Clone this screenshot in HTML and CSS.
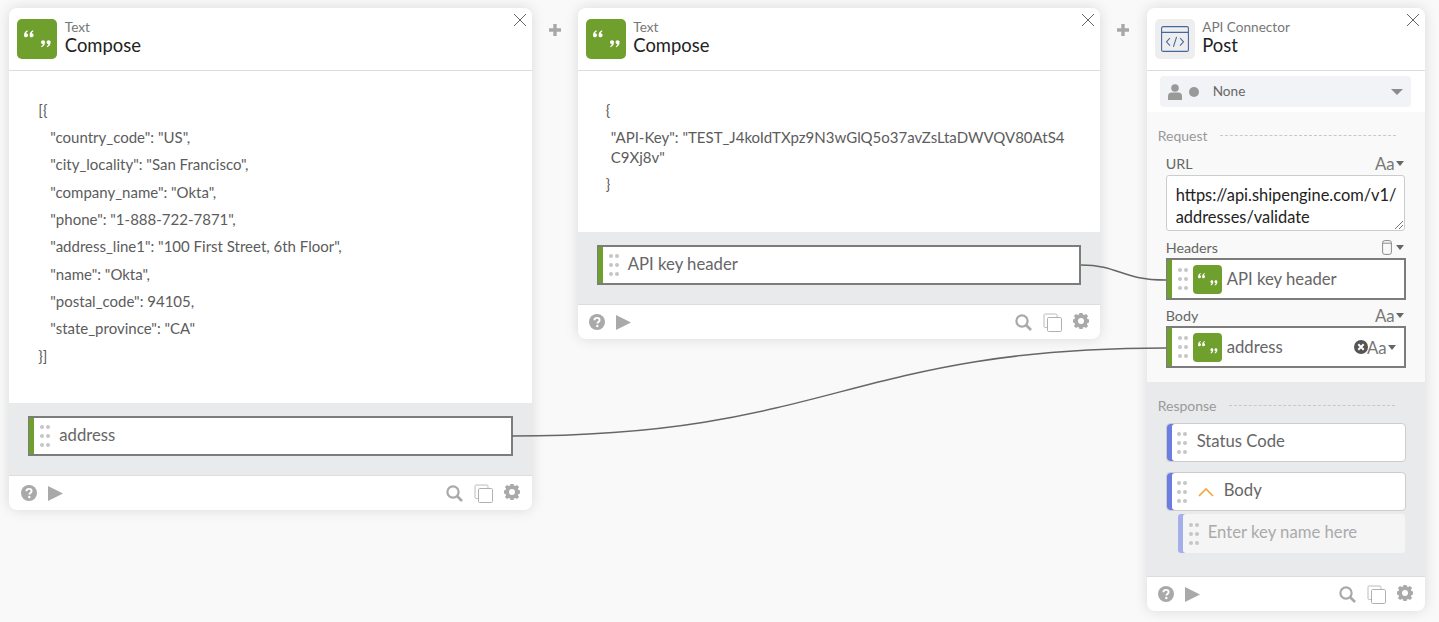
FILE: index.html
```html
<!DOCTYPE html>
<html lang="en">
<head>
<meta charset="utf-8">
<title>Flow</title>
<link rel="stylesheet" href="styles.css">
</head>
<body>
<svg class="defs" width="0" height="0" aria-hidden="true">
  <symbol id="quotes" viewBox="0 0 40 40">
    <g fill="#fff">
      <path d="M7 16.400c0-2.500 1.100-4.200 3.300-5.200l.6 1c-1.100.6-1.700 1.300-1.700 2.100 1 0 1.800.8 1.800 1.900s-.8 2-2 2-2-.8-2-1.800z"/>
      <path d="M12.600 16.400c0-2.500 1.100-4.200 3.300-5.200l.6 1c-1.100.6-1.700 1.300-1.700 2.100 1 0 1.800.8 1.800 1.900s-.8 2-2 2-2-.8-2-1.800z"/>
      <path d="M28 23c0 2.500-1.100 4.200-3.300 5.200l-.6-1c1.100-.6 1.700-1.300 1.700-2.100-1 0-1.800-.8-1.800-1.900s.8-2 2-2 2 .8 2 1.800z"/>
      <path d="M33.600 23c0 2.500-1.100 4.200-3.300 5.200l-.6-1c1.100-.6 1.700-1.300 1.700-2.100-1 0-1.800-.8-1.800-1.900s.8-2 2-2 2 .8 2 1.800z"/>
    </g>
  </symbol>
  <symbol id="close" viewBox="0 0 14 14"><path d="M1 1l12 12M13 1L1 13" stroke="#666" stroke-width="1" fill="none"/></symbol>
  <symbol id="plus" viewBox="0 0 14 14"><path d="M7 1v12M1 7h12" stroke="#a8a8a8" stroke-width="3.400" fill="none"/></symbol>
  <symbol id="help" viewBox="0 0 16 16"><circle cx="8" cy="8" r="8" fill="#a9a9a9"/><path d="M5.400 6.200C5.500 4.700 6.600 3.900 8 3.900c1.500 0 2.600.9 2.600 2.200 0 1.900-2.200 1.800-2.200 3.400" fill="none" stroke="#fff" stroke-width="1.900"/><circle cx="8.300" cy="12" r="1.200" fill="#fff"/></symbol>
  <symbol id="play" viewBox="0 0 15 15"><path d="M0 0l15 7.500L0 15z" fill="#a9a9a9"/></symbol>
  <symbol id="search" viewBox="0 0 17 17"><circle cx="7" cy="7" r="5.600" fill="none" stroke="#a9a9a9" stroke-width="2.200"/><path d="M11 11l5 5" stroke="#a9a9a9" stroke-width="2.600"/></symbol>
  <symbol id="copy" viewBox="0 0 19 19"><path d="M4 14.500H2.200A1.200 1.200 0 0 1 1 13.300V2.200A1.200 1.200 0 0 1 2.200 1h10.600A1.200 1.200 0 0 1 14 2.200V4" fill="none" stroke="#bcbcbc"/><rect x="4.500" y="4.500" width="14" height="14" rx="1.200" fill="#fff" stroke="#b0b0b0"/></symbol>
  <symbol id="gear" viewBox="0 0 16 16"><path fill="#a9a9a9" fill-rule="evenodd" d="M6.500 0h3l.4 2.100 1.300.6L13 1.500l2.100 2.100-1.200 1.800.6 1.300 2.100.4v3l-2.100.4-.6 1.300 1.200 1.800-2.100 2.100-1.800-1.200-1.300.6-.4 2.100h-3l-.4-2.100-1.300-.6L3 15.700.9 13.600l1.200-1.800-.6-1.300L-.6 10.100v-3l2.100-.4.6-1.300L.9 3.600 3 1.500l1.800 1.200 1.300-.6zM8 5.500a3 3 0 1 0 0 6 3 3 0 0 0 0-6z" transform="translate(0 -.6)"/></symbol>
  <symbol id="grip" viewBox="0 0 10 20"><g fill="#c6c6c6"><circle cx="2" cy="1" r="2"/><circle cx="8" cy="1" r="2"/><circle cx="2" cy="10" r="2"/><circle cx="8" cy="10" r="2"/><circle cx="2" cy="19" r="2"/><circle cx="8" cy="19" r="2"/></g></symbol>
  <symbol id="user" viewBox="0 0 14 16"><circle cx="7" cy="4" r="3.800" fill="#999"/><path d="M0 16v-4c0-2 1.500-3.500 3.500-3.500h7c2 0 3.500 1.500 3.500 3.500v4z" fill="#999"/></symbol>
  <symbol id="db" viewBox="0 0 10 15"><rect x=".6" y=".6" width="8.800" height="13.800" rx="2.200" fill="none" stroke="#8a8a8a"/><path d="M.6 3.200h8.800" stroke="#8a8a8a"/></symbol>
  <symbol id="api" viewBox="0 0 28 26"><g fill="none" stroke="#44679f" stroke-width="1.100"><rect x=".6" y=".6" width="26.800" height="24.800" rx="1.500"/><path d="M.6 6.400h26.800"/><path d="M9 12l-3.500 3.800L9 19.600M19 12l3.500 3.800L19 19.600M15.600 10.800l-3.200 10"/></g></symbol>
  <symbol id="clear" viewBox="0 0 14 14"><circle cx="7" cy="7" r="7" fill="#555"/><path d="M4.300 4.300l5.400 5.400M9.700 4.300l-5.400 5.400" stroke="#fff" stroke-width="2"/></symbol>
  <symbol id="chev" viewBox="0 0 16 10"><path d="M1 9l7-7 7 7" fill="none" stroke="#f2a93b" stroke-width="1.700"/></symbol>
</svg>

<main class="canvas">
  <svg class="wires" width="1439" height="622" aria-hidden="true">
    <path d="M512 436C830 436 850 348 1166 348" fill="none" stroke="#666" stroke-width="1.500"/>
    <path d="M1081 265C1120 265 1120 280 1166 280" fill="none" stroke="#666" stroke-width="1.500"/>
  </svg>

  <section class="card card-wide">
    <svg class="close"><use href="#close"/></svg>
    <header class="head">
      <svg class="tile"><use href="#quotes"/></svg>
      <div class="titles"><div class="kind">Text</div><div class="name">Compose</div></div>
    </header>
    <div class="text text-a">
      <p class="line">[{</p>
      <p class="line in">"country_code": "US",</p>
      <p class="line in">"city_locality": "San Francisco",</p>
      <p class="line in">"company_name": "Okta",</p>
      <p class="line in">"phone": "1-888-722-7871",</p>
      <p class="line in">"address_line1": "100 First Street, 6th Floor",</p>
      <p class="line in">"name": "Okta",</p>
      <p class="line in">"postal_code": 94105,</p>
      <p class="line in">"state_province": "CA"</p>
      <p class="line">}]</p>
    </div>
    <div class="outs">
      <div class="pill pill-sel"><svg class="grip"><use href="#grip"/></svg><span class="label">address</span></div>
    </div>
    <footer class="foot">
      <svg class="ic-help"><use href="#help"/></svg><svg class="ic-play"><use href="#play"/></svg>
      <span class="spacer"></span>
      <svg class="ic-search"><use href="#search"/></svg><svg class="ic-copy"><use href="#copy"/></svg><svg class="ic-gear"><use href="#gear"/></svg>
    </footer>
  </section>

  <div class="gutter"><svg class="plus"><use href="#plus"/></svg></div>

  <section class="card card-wide">
    <svg class="close"><use href="#close"/></svg>
    <header class="head">
      <svg class="tile"><use href="#quotes"/></svg>
      <div class="titles"><div class="kind">Text</div><div class="name">Compose</div></div>
    </header>
    <div class="text text-b">
      <p class="line">{</p>
      <p class="line key">"API-Key": "TEST_J4koIdTXpz9N3wGlQ5o37avZsLtaDWVQV80AtS4<br>C9Xj8v"</p>
      <p class="line">}</p>
    </div>
    <div class="outs">
      <div class="pill pill-sel"><svg class="grip"><use href="#grip"/></svg><span class="label">API key header</span></div>
    </div>
    <footer class="foot">
      <svg class="ic-help"><use href="#help"/></svg><svg class="ic-play"><use href="#play"/></svg>
      <span class="spacer"></span>
      <svg class="ic-search"><use href="#search"/></svg><svg class="ic-copy"><use href="#copy"/></svg><svg class="ic-gear"><use href="#gear"/></svg>
    </footer>
  </section>

  <div class="gutter"><svg class="plus"><use href="#plus"/></svg></div>

  <section class="card card-api">
    <svg class="close"><use href="#close"/></svg>
    <header class="head">
      <span class="tile tile-api"><svg class="api"><use href="#api"/></svg></span>
      <div class="titles"><div class="kind">API Connector</div><div class="name">Post</div></div>
    </header>
    <div class="auth">
      <div class="select">
        <svg class="user"><use href="#user"/></svg><span class="dot"></span><span class="sel-text">None</span><span class="caret caret-lg"></span>
      </div>
    </div>
    <div class="request">
      <div class="section-label"><span>Request</span><i class="dash dash-req"></i></div>
      <div class="field">
        <div class="field-head"><span>URL</span><span class="aa">Aa<i class="caret"></i></span></div>
        <div class="url">https://api.shipengine.com/v1/<br>addresses/validate
          <svg class="resize" width="9" height="9"><path d="M1 9l8-8M5 9l4-4" stroke="#777" fill="none"/></svg>
        </div>
      </div>
      <div class="field field-h">
        <div class="field-head"><span>Headers</span><span class="aa"><svg class="db"><use href="#db"/></svg><i class="caret"></i></span></div>
        <div class="pill pill-sel pill-in"><svg class="grip"><use href="#grip"/></svg><svg class="tile-sm"><use href="#quotes"/></svg><span class="label">API key header</span></div>
      </div>
      <div class="field field-b">
        <div class="field-head"><span>Body</span><span class="aa">Aa<i class="caret"></i></span></div>
        <div class="pill pill-sel pill-in"><svg class="grip"><use href="#grip"/></svg><svg class="tile-sm"><use href="#quotes"/></svg><span class="label">address</span><span class="spacer"></span><svg class="clear"><use href="#clear"/></svg><span class="aa aa-in">Aa<i class="caret"></i></span></div>
      </div>
    </div>
    <div class="response">
      <div class="section-label"><span>Response</span><i class="dash dash-res"></i></div>
      <div class="pill pill-blue"><svg class="grip"><use href="#grip"/></svg><span class="label">Status Code</span></div>
      <div class="pill pill-blue pill-body"><svg class="grip"><use href="#grip"/></svg><svg class="chev"><use href="#chev"/></svg><span class="label">Body</span></div>
      <div class="pill pill-child"><svg class="grip"><use href="#grip"/></svg><span class="label">Enter key name here</span></div>
    </div>
    <footer class="foot">
      <svg class="ic-help"><use href="#help"/></svg><svg class="ic-play"><use href="#play"/></svg>
      <span class="spacer"></span>
      <svg class="ic-search"><use href="#search"/></svg><svg class="ic-copy"><use href="#copy"/></svg><svg class="ic-gear"><use href="#gear"/></svg>
    </footer>
  </section>
</main>
</body>
</html>
```
FILE: styles.css
```css
* { box-sizing: border-box; }
html, body { margin: 0; height: 100%; overflow: hidden; }
body { background: #f9f9f9; font-family: Lato, "Open Sans", sans-serif; color: #555; }
.defs { position: absolute; }
.canvas { position: relative; display: flex; align-items: flex-start; padding: 8px 0 0 9.3px; height: 622px; }
.wires { position: absolute; left: 0; top: 0; z-index: 2; pointer-events: none; }
svg { display: block; flex: none; }

.card { position: relative; flex: none; background: #fff; border-radius: 8px; box-shadow: 0 0 14px rgba(0,0,0,.13); overflow: hidden; }
.card-wide { width: 522.5px; }
.card-api { width: 278px; margin-left: .4px; }
.gutter { flex: none; width: 46px; display: flex; justify-content: center; padding-top: 15px; }
.plus { width: 14px; height: 14px; }
.close { position: absolute; top: 5px; right: 5px; width: 14px; height: 14px; }

.head { display: flex; align-items: center; gap: 7.5px; height: 63px; padding: 0 8px; border-bottom: 1px solid #ddd; }
.tile { width: 40px; height: 40px; background: #6f9f2d; border-radius: 5px; flex: none; }
.tile-api { background: #eee; display: flex; align-items: center; justify-content: center; }
.api { width: 28px; height: 26px; }
.titles { display: flex; flex-direction: column; padding-bottom: 4px; }
.kind { font-size: 13.6px; line-height: 16px; color: #777; }
.name { font-size: 18.4px; line-height: 21px; color: #222; }

.text { color: #5c5c5c; font-size: 15px; }
.line { margin: 0 0 7.36px; line-height: 20px; }
.text-a { height: 332px; padding: 28.6px 0 0 29px; }
.text-a .in { padding-left: 12px; }
.text-b { height: 161px; padding: 28.6px 0 0 28px; }
.key { padding-left: 5px; }

.outs { background: #e9eaec; padding: 13px 19px 19px 19px; border-bottom: 1px solid #ddd; }
.pill { display: flex; align-items: center; height: 40px; background: #fff; color: #666; }
.label { font-size: 16.7px; padding: 0 0 2px 1px; }
.pill-sel { border: 2px solid #7c7c7c; border-left-width: 1px; box-shadow: inset 5px 0 0 #6f9f2d; }
.grip { width: 10px; height: 22px; margin: 0 8px 0 11px; overflow: visible; }
.foot { display: flex; align-items: center; height: 34px; padding: 0 11.5px 0 11.5px; }
.spacer { flex: 1; }
.ic-help { width: 16px; height: 16px; }
.ic-play { width: 15px; height: 15px; margin-left: 11px; }
.ic-search { width: 17px; height: 17px; margin-right: 11px; }
.ic-copy { width: 19px; height: 19px; margin-right: 11px; overflow: visible; }
.ic-gear { width: 16px; height: 16px; overflow: visible; margin-top: -3px; }

.auth { height: 41px; padding: 5px 13.7px 0 13px; }
.select { display: flex; align-items: center; height: 31px; background: #f2f3f6; border-radius: 4px; padding: 0 8px; font-size: 13.6px; color: #666; }
.sel-text { margin-left: 14px; flex: 1; padding-bottom: 2px; }
.user { width: 14px; height: 16px; }
.dot { width: 10px; height: 10px; border-radius: 50%; background: #999; margin-left: 7px; }
.caret { display: inline-block; width: 0; height: 0; border: 4.5px solid transparent; border-top: 5px solid #666; border-bottom: 0; margin-left: 1px; vertical-align: 2px; }
.caret-lg { border-width: 6px 6px 0; border-top-color: #8c8c8c; border-style: solid; border-left-color: transparent; border-right-color: transparent; margin-right: 0; }

.request { height: 270px; background: #f9f9f9; padding: 15px 19px 0 19px; }
.section-label { display: flex; align-items: center; font-size: 14px; line-height: 17px; color: #999; margin-left: -8px; }
.dash { display: block; border-top: 1px dashed #c8c8c8; margin-left: 12px; }
.dash-req { width: 176px; }
.dash-res { width: 166px; }
.field { margin-top: 11px; }
.field-h { margin-top: 8px; }
.field-b { margin-top: 7px; }
.field-head { display: flex; justify-content: space-between; align-items: center; height: 17px; font-size: 14.3px; color: #666; padding-right: 2px; }
.aa { font-size: 16.8px; color: #777; display: flex; align-items: center; }
.aa .caret { margin-left: 1px; }
.db { width: 10px; height: 15px; margin-right: 3px; }
.url { position: relative; margin-top: 3px; height: 56px; width: 239px; padding: 8px 0 0 9px; background: #fff; border: 1px solid #ccc; border-radius: 3px; font-size: 16.4px; line-height: 22px; color: #222; }
.resize { position: absolute; right: 1px; bottom: 1px; }
.pill-in { margin-top: 2px; height: 42px; width: 240px; }
.pill-in .label { padding-bottom: 0; }
.pill-in .grip { margin: 0 5px 0 11px; }
.tile-sm { width: 29px; height: 29px; background: #6f9f2d; border-radius: 4px; margin-right: 4px; }
.clear { width: 14px; height: 14px; margin-right: -1px; }
.aa-in { margin: 0 8px 0 0; }

.response { height: 195px; background: #e9eaec; padding: 15px 19px 0 19px; border-bottom: 1px solid #ddd; }
.pill-blue { margin-top: 9px; height: 39px; width: 240px; border: 1px solid #ccc; border-radius: 4px; box-shadow: inset 5px 0 0 #6b7de0; }
.pill-blue .label { padding-bottom: 3px; }
.pill-blue .grip { margin: 0 9px 0 10px; }
.pill-body { margin-top: 10px; }
.chev { width: 16px; height: 10px; margin: 0 9px 0 2px; }
.pill-child { margin: 3px 0 0 12px; height: 39px; width: 227px; background: #f5f5f6; border-radius: 3px; box-shadow: inset 5px 0 0 #a4aee8; color: #aaa; }
.pill-child .label { padding-bottom: 3px; }
```
